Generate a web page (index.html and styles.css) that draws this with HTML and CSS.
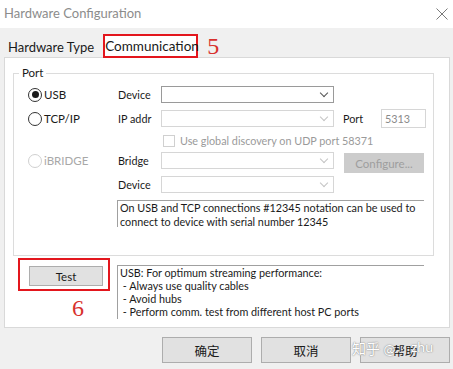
FILE: index.html
```html
<!DOCTYPE html>
<html lang="en">
<head>
  <meta charset="UTF-8">
  <title>Hardware Configuration</title>
  <link rel="stylesheet" href="styles.css">
</head>
<body>
  <div class="window">
    <div class="titlebar">
      <span class="title">Hardware Configuration</span>
      <svg class="close" width="12" height="12" viewBox="0 0 12 12">
        <path d="M0.5 0.5 L11.5 11.5 M11.5 0.5 L0.5 11.5" stroke="#7a7a7a" stroke-width="1" fill="none"/>
      </svg>
    </div>

    <div class="tabs">
      <span class="tab">Hardware Type</span>
      <span class="tab active">Communication</span>
      <span class="mark mark-5">5</span>
    </div>

    <div class="panel">
      <div class="group">
        <span class="legend">Port</span>
        <div class="port-grid">
          <label class="radio checked row1"><span class="dot"></span>USB</label>
          <span class="field-label row1">Device</span>
          <div class="combo row1"><span class="chev"></span></div>

          <label class="radio row2"><span class="dot"></span>TCP/IP</label>
          <span class="field-label row2">IP addr</span>
          <div class="combo disabled row2"><span class="chev"></span></div>
          <span class="port-label row2">Port</span>
          <div class="port-input row2">5313</div>

          <label class="check row3"><span class="box"></span>Use global discovery on UDP port 58371</label>

          <label class="radio disabled row4"><span class="dot"></span>iBRIDGE</label>
          <span class="field-label row4">Bridge</span>
          <div class="combo disabled row4"><span class="chev"></span></div>
          <div class="btn configure row4">Configure...</div>

          <span class="field-label row5">Device</span>
          <div class="combo disabled row5"><span class="chev"></span></div>
        </div>
        <div class="note note-serial">On USB and TCP connections #12345 notation can be used to
connect to device with serial number 12345</div>
      </div>

      <div class="test-row">
        <div class="test-col">
          <div class="test-mark"><div class="btn test-btn">Test</div></div>
          <span class="mark mark-6">6</span>
        </div>
        <div class="note note-usb">USB: For optimum streaming performance:
 - Always use quality cables
 - Avoid hubs
 - Perform comm. test from different host PC ports</div>
      </div>
    </div>

    <div class="footer">
      <div class="btn dlg-btn">确定</div>
      <div class="btn dlg-btn">取消</div>
      <div class="btn dlg-btn">帮助</div>
    </div>

    <span class="watermark wm-left">知乎 @</span>
    <span class="watermark wm-right">zhu</span>
  </div>
</body>
</html>
```

FILE: styles.css
```css
body {
  margin: 0;
  font-family: Lato, "Noto Sans CJK SC", sans-serif;
  font-size: 10.8px;
  color: #1a1a1a;
}
.window {
  position: relative;
  width: 453px;
  height: 369px;
  background: #f0f0f0;
  overflow: hidden;
}
.titlebar {
  height: 28px;
  background: #fff;
  display: flex;
  align-items: center;
  justify-content: space-between;
  padding: 0 5px 2px 4px;
  box-sizing: border-box;
}
.title {
  color: #8c8c8c;
  font-size: 13px;
}
.close { margin-top: 2px; }

.tabs {
  height: 29px;
  display: flex;
  align-items: flex-end;
  padding-left: 4px;
  position: relative;
  z-index: 1;
}
.tab {
  height: 21px;
  line-height: 22px;
  font-size: 13px;
  padding: 0 4px;
  box-sizing: border-box;
}
.tab.active {
  height: 24px;
  line-height: 20px;
  font-size: 13.5px;
  background: #fff;
  border: 2px solid #e3161d;
  padding: 0 2px 0 0;
  margin-left: 5px;
  margin-bottom: -1px;
  width: 95px;
}
.mark {
  font-family: "Liberation Serif", serif;
  color: #d8312d;
  font-size: 24px;
  line-height: 24px;
}
.mark-5 {
  margin-left: 9px;
  align-self: center;
  margin-top: 6px;
}

.panel {
  margin-left: 4px;
  width: 446px;
  height: 271px;
  background: #fff;
  border: 1px solid #d9d9d9;
  box-sizing: border-box;
}
.group {
  position: relative;
  margin: 15px 0 0 8px;
  width: 421px;
  height: 183px;
  border: 1px solid #dcdcdc;
  box-sizing: border-box;
  padding: 12px 0 0 14px;
}
.legend {
  position: absolute;
  top: -9px;
  left: 5px;
  padding: 0 3px;
  background: #fff;
  line-height: 16px;
  font-size: 11.5px;
}

.port-grid {
  display: grid;
  grid-template-columns: 90px 43px 173px 9px 38px 45px;
  grid-template-rows: 24px 21px 21px 24px 17px;
}
.row1 { grid-row: 1; }
.row2 { grid-row: 2; }
.row3 { grid-row: 3; }
.row4 { grid-row: 4; }
.row5 { grid-row: 5; }

.radio {
  grid-column: 1;
  height: 17px;
  display: flex;
  align-items: center;
  gap: 2px;
  font-size: 11.5px;
}
.radio .dot {
  width: 14px;
  height: 14px;
  border: 1px solid #333;
  border-radius: 50%;
  box-sizing: border-box;
  display: flex;
  align-items: center;
  justify-content: center;
}
.radio.checked .dot::after {
  content: "";
  width: 7px;
  height: 7px;
  border-radius: 50%;
  background: #1a1a1a;
}
.radio.disabled { color: #a8a8a8; }
.radio.disabled .dot { border-color: #d0d0d0; }

.field-label {
  grid-column: 2;
  height: 17px;
  line-height: 17px;
}
.combo {
  grid-column: 3;
  height: 17px;
  border: 1px solid #9a9a9a;
  box-sizing: border-box;
  display: flex;
  align-items: center;
  justify-content: flex-end;
  padding-right: 6px;
}
.combo.disabled { border-color: #d6d6d6; }
.chev {
  width: 5px;
  height: 5px;
  border-right: 1px solid #555;
  border-bottom: 1px solid #555;
  transform: rotate(45deg);
  margin-top: -3px;
}
.combo.disabled .chev { border-color: #c4c4c4; }

.port-label {
  grid-column: 5;
  height: 17px;
  line-height: 17px;
}
.port-input {
  grid-column: 6;
  height: 19px;
  margin-top: -1px;
  border: 1px solid #d6d6d6;
  box-sizing: border-box;
  color: #8a8a8a;
  line-height: 17px;
  padding-left: 3px;
}

.check {
  grid-column: 3 / 7;
  height: 17px;
  display: flex;
  align-items: center;
  gap: 5px;
  color: #9a9a9a;
  padding-left: 2px;
  margin-top: 1px;
}
.check .box {
  width: 12px;
  height: 12px;
  border: 1px solid #d0d0d0;
  box-sizing: border-box;
}

.btn {
  background: #e1e1e1;
  border: 1px solid #adadad;
  box-sizing: border-box;
  display: flex;
  align-items: center;
  justify-content: center;
}
.configure {
  grid-column: 5 / 7;
  height: 20px;
  width: 80px;
  margin-left: 1px;
  margin-top: 1px;
  background: #cccccc;
  border-color: #cccccc;
  color: #9e9e9e;
  font-size: 11.5px;
}

.note {
  white-space: pre;
  border-top: 1px solid #a0a0a0;
  border-left: 1px solid #a0a0a0;
  box-sizing: border-box;
  line-height: 14px;
  padding: 0 0 0 2px;
}
.note-serial {
  margin: 7px 0 0 89px;
  width: 307px;
  height: 27px;
}

.test-row {
  display: flex;
  margin-top: 2px;
}
.test-col {
  display: flex;
  flex-direction: column;
  margin-left: 13px;
}
.test-mark {
  width: 92px;
  height: 33px;
  border: 2px solid #e3161d;
  box-sizing: border-box;
  padding: 6px 0 0 9px;
}
.test-btn {
  width: 74px;
  height: 20px;
  font-size: 11.5px;
}
.mark-6 {
  margin: 5px 0 0 54px;
}
.note-usb {
  margin: 7px 0 0 7px;
  width: 307px;
  height: 54px;
  line-height: 13px;
}

.footer {
  display: flex;
  justify-content: flex-end;
  gap: 9px;
  padding: 9px 3px 0 0;
}
.dlg-btn {
  width: 90px;
  height: 26px;
  font-size: 12.5px;
}

.watermark {
  position: absolute;
  top: 338px;
  font-size: 14px;
  color: #fff;
  text-shadow: 0 0 1px #8a8a8a, 0 0 2px #9a9a9a;
}
.wm-left { left: 352px; }
.wm-right { left: 411px; }
```
